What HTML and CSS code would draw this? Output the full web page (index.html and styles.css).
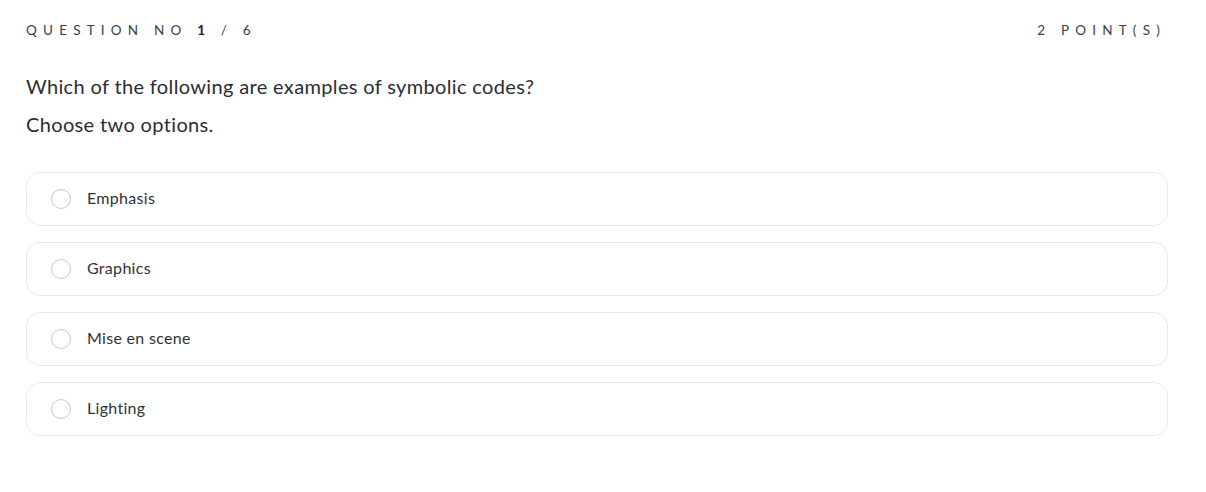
FILE: index.html
```html
<!DOCTYPE html>
<html>
<head>
<meta charset="utf-8">
<link rel="stylesheet" href="styles.css">
</head>
<body>
<div class="quiz">
  <div class="meta">
    <div class="qno">QUESTION NO <b>1</b> / 6</div>
    <div class="points">2 POINT(S)</div>
  </div>
  <p class="question">Which of the following are examples of symbolic codes?</p>
  <p class="hint">Choose two options.</p>
  <div class="options">
    <label class="option"><span class="radio"></span><span class="label">Emphasis</span></label>
    <label class="option"><span class="radio"></span><span class="label">Graphics</span></label>
    <label class="option"><span class="radio"></span><span class="label">Mise en scene</span></label>
    <label class="option"><span class="radio"></span><span class="label">Lighting</span></label>
  </div>
</div>
</body>
</html>
```
FILE: styles.css
```css
* { box-sizing: border-box; }
html, body { margin: 0; padding: 0; background: #fff; }
body { font-family: "Lato", "Noto Sans", sans-serif; color: #2b2f33; }
.quiz { padding: 20px 38px 0 26px; }
.meta { display: flex; justify-content: space-between; align-items: center; height: 20px; font-size: 13.5px; letter-spacing: 6.2px; color: #3a4045; }
.meta b { font-weight: 700; color: #222; }
.points { margin-right: 2px; }
.question { margin: 33px 0 0; font-size: 20px; line-height: 26px; letter-spacing: 0.35px; color: #2a2e33; }
.hint { margin: 12px 0 0; font-size: 20px; line-height: 26px; letter-spacing: 0.35px; color: #2a2e33; }
.options { display: flex; flex-direction: column; gap: 16px; margin-top: 35px; margin-right: 0; }
.option { display: flex; align-items: center; height: 54px; border: 1px solid #e9e9e9; border-radius: 14px; padding-left: 24px; }
.radio { width: 20px; height: 20px; border: 1px solid #c8c8c8; border-radius: 50%; flex: none; }
.label { margin-left: 16px; padding-bottom: 3px; font-size: 16px; letter-spacing: 0.3px; color: #2f3337; }
```
